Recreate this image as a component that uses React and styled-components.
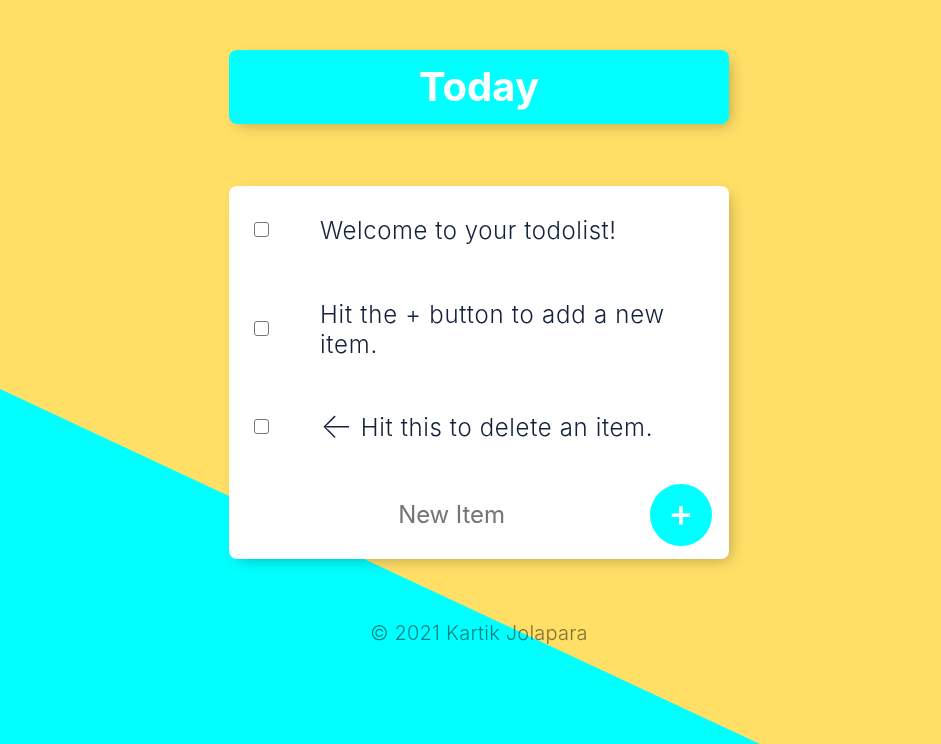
import React from "react";
import styled, { createGlobalStyle } from "styled-components";

const Global = createGlobalStyle`
  html, body { margin: 0; padding: 0; }
  body {
    background: #ffdf66;
    font-family: Inter, "Liberation Sans", sans-serif;
    min-height: 744px;
    overflow: hidden;
  }
  body::before {
    content: "";
    position: fixed;
    inset: 0;
    background: #00ffff;
    clip-path: polygon(0 389px, 760px 744px, 0 744px);
  }
`;

const Page = styled.main`
  position: relative;
  display: flex;
  flex-direction: column;
  align-items: center;
  padding: 50px 0 0 17px;
  box-sizing: border-box;
  height: 744px;
`;

const Heading = styled.header`
  width: 500px;
  height: 74px;
  display: flex;
  align-items: center;
  justify-content: center;
  background: #00ffff;
  border-radius: 8px;
  box-shadow: 5px 5px 15px -5px rgba(0, 0, 0, 0.3);
`;

const Title = styled.h1`
  margin: 0;
  color: #fff;
  font-size: 40px;
  font-weight: 700;
  line-height: 1;
`;

const Card = styled.section`
  width: 500px;
  height: 373px;
  margin-top: 62px;
  background: #fff;
  border-radius: 8px;
  box-shadow: 5px 5px 15px -5px rgba(0, 0, 0, 0.3);
  box-sizing: border-box;
  position: relative;
`;

const Row = styled.label`
  display: flex;
  align-items: center;
  height: ${(p) => p.$h}px;
  padding-left: 25px;
`;

const Check = styled.input.attrs({ type: "checkbox" })`
  appearance: none;
  width: 15px;
  height: 15px;
  margin: -2px 0 0;
  flex: none;
  box-sizing: border-box;
  background: #fff;
  border: 1.25px solid #767676;
  border-radius: 3px;
`;

const ItemText = styled.p`
  margin: 2px 0 0 51px;
  width: 360px;
  color: #14213d;
  font-size: 24px;
  font-weight: 300;
  line-height: 30px;
  letter-spacing: ${(p) => p.$spacing}px;
`;

const Arrow = styled.span`
  font-size: 35px;
  font-weight: 200;
  line-height: 0;
  letter-spacing: 0;
  vertical-align: -2px;
`;

const Form = styled.form`
  display: flex;
  align-items: center;
  padding: 14px 17px 0 0;
`;

const Input = styled.input`
  flex: 1;
  min-width: 0;
  border: 0;
  outline: 0;
  background: transparent;
  text-align: center;
  font-family: Inter, "Liberation Sans", sans-serif;
  font-size: 24px;
  color: #14213d;
  padding: 0 0 2px 24px;
  letter-spacing: -0.1px;
  &::placeholder {
    color: #757575;
    opacity: 1;
  }
`;

const AddButton = styled.button`
  flex: none;
  width: 62px;
  height: 62px;
  border: 0;
  border-radius: 50%;
  background: #00ffff;
  color: #fff;
  padding: 0 0 6px;
  display: flex;
  align-items: center;
  justify-content: center;
  font-family: Inter, sans-serif;
  font-size: 38px;
  font-weight: 500;
  line-height: 1;
`;

const Footer = styled.footer`
  margin-top: 62px;
  color: rgba(0, 0, 0, 0.5);
  font-size: 20px;
  font-weight: 300;
  line-height: 24px;
  letter-spacing: 0.22px;
  text-align: center;
`;

export default function App() {
  return (
    <>
      <Global />
      <Page>
        <Heading>
          <Title>Today</Title>
        </Heading>
        <Card>
          <Row $h={88}>
            <Check />
            <ItemText $spacing={0.56}>Welcome to your todolist!</ItemText>
          </Row>
          <Row $h={110}>
            <Check />
            <ItemText $spacing={0.76}>Hit the + button to add a new item.</ItemText>
          </Row>
          <Row $h={86}>
            <Check />
            <ItemText $spacing={0.64}><Arrow>←</Arrow> Hit this to delete an item.</ItemText>
          </Row>
          <Form onSubmit={(e) => e.preventDefault()}>
            <Input placeholder="New Item" aria-label="New Item" />
            <AddButton type="submit">+</AddButton>
          </Form>
        </Card>
        <Footer>© 2021 Kartik Jolapara</Footer>
      </Page>
    </>
  );
}
